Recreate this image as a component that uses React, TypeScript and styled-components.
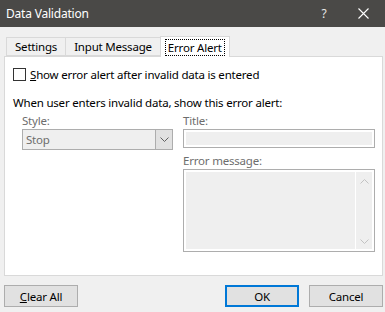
import React from "react";
import styled, { createGlobalStyle } from "styled-components";

const GlobalStyle = createGlobalStyle`
  html, body {
    margin: 0;
    padding: 0;
    background: #f0f0f0;
  }
  #root {
    width: 385px;
    height: 312px;
    overflow: hidden;
  }
  * {
    box-sizing: border-box;
  }
`;

const font = `"Noto Sans", "Open Sans", "Liberation Sans", sans-serif`;

const Dialog = styled.div`
  width: 385px;
  height: 312px;
  display: flex;
  flex-direction: column;
  background: #f0f0f0;
  font-family: ${font};
  font-size: 11.5px;
  letter-spacing: -0.2px;
  color: #000;
`;

const TitleBar = styled.div`
  height: 27px;
  background: #4a4947;
  display: flex;
  align-items: center;
  padding-left: 6px;
  color: #fff;
  font-size: 12px;
`;

const TitleText = styled.span`
  flex: 1;
`;

const TitleButton = styled.span<{ $w: number }>`
  width: ${(p) => p.$w}px;
  display: flex;
  justify-content: center;
  align-items: center;
  color: #e8e8e8;
`;

const Body = styled.div`
  flex: 1;
  display: flex;
  flex-direction: column;
  padding: 8px 2px 5px 4px;
`;

const TabRow = styled.div`
  display: flex;
  align-items: flex-end;
  height: 21px;
  padding-left: 3px;
  position: relative;
  z-index: 1;
`;

const Tab = styled.div<{ $active?: boolean }>`
  height: ${(p) => (p.$active ? 21 : 19)}px;
  padding: 0 ${(p) => (p.$active ? 5 : 8)}px;
  display: flex;
  align-items: center;
  background: ${(p) => (p.$active ? "#fff" : "#f0f0f0")};
  border: 1px solid #d9d9d9;
  border-bottom: ${(p) => (p.$active ? "none" : "1px solid #d9d9d9")};
  margin-left: -1px;
  margin-bottom: ${(p) => (p.$active ? -1 : 0)}px;
`;

const FocusText = styled.span`
  outline: 1px dotted #000;
  padding: 0 2px;
  line-height: 15px;
`;

const Panel = styled.div`
  height: 220px;
  background: #fff;
  border: 1px solid #d9d9d9;
  padding: 10px 8px 0 8px;
  display: flex;
  flex-direction: column;
`;

const CheckRow = styled.label`
  display: flex;
  align-items: center;
  gap: 4px;
  height: 15px;
`;

const CheckBox = styled.span`
  width: 13px;
  height: 13px;
  border: 1px solid #333;
  background: #fff;
`;

const Underline = styled.span`
  text-decoration: underline;
`;

const Heading = styled.div`
  margin-top: 12px;
  height: 16px;
  display: flex;
  align-items: center;
`;

const Columns = styled.div`
  display: grid;
  grid-template-columns: 151px 192px;
  column-gap: 10px;
  padding-left: 9px;
  margin-top: 2px;
`;

const Field = styled.div`
  display: flex;
  flex-direction: column;
`;

const Label = styled.div<{ $top?: number }>`
  color: #6d6d6d;
  height: 16px;
  display: flex;
  align-items: center;
  margin-top: ${(p) => p.$top ?? 0}px;
  margin-bottom: 1px;
`;

const Combo = styled.div`
  height: 21px;
  border: 1px solid #adadad;
  background: #efefef;
  display: flex;
  color: #6d6d6d;
`;

const ComboText = styled.div`
  flex: 1;
  display: flex;
  align-items: center;
  padding-left: 3px;
`;

const ComboButton = styled.div`
  width: 17px;
  border-left: 1px solid #adadad;
  background: #e1e1e1;
  display: flex;
  align-items: center;
  justify-content: center;
`;

const TextBox = styled.div<{ $h: number }>`
  height: ${(p) => p.$h}px;
  border: 1px solid #adadad;
  background: #fff;
  padding: 2px;
  display: flex;
`;

const Fill = styled.div`
  flex: 1;
  background: #efefef;
`;

const ScrollBar = styled.div`
  width: 16px;
  margin-left: 1px;
  background: #efefef;
  display: flex;
  flex-direction: column;
  justify-content: space-between;
  align-items: center;
  padding: 7px 0 5px;
`;

const ButtonRow = styled.div`
  display: flex;
  align-items: center;
  margin-top: 9px;
`;

const Button = styled.div<{ $primary?: boolean }>`
  width: 74px;
  height: 22px;
  display: flex;
  align-items: center;
  justify-content: center;
  background: #e1e1e1;
  border: ${(p) => (p.$primary ? "2px solid #0078d7" : "1px solid #adadad")};
`;

const Spacer = styled.div`
  flex: 1;
`;

const Gap = styled.div<{ $w: number }>`
  width: ${(p) => p.$w}px;
`;

function Chevron({ up, color }: { up?: boolean; color: string }) {
  return (
    <svg width="9" height="5" viewBox="0 0 9 5">
      <path
        d={up ? "M0.5 4.5 L4.5 0.5 L8.5 4.5" : "M0.5 0.5 L4.5 4.5 L8.5 0.5"}
        fill="none"
        stroke={color}
        strokeWidth="1"
      />
    </svg>
  );
}

function CloseIcon() {
  return (
    <svg width="11" height="11" viewBox="0 0 11 11">
      <path d="M0.5 0.5 L10.5 10.5 M10.5 0.5 L0.5 10.5" stroke="#fff" strokeWidth="1.1" />
    </svg>
  );
}

export default function App() {
  return (
    <>
      <GlobalStyle />
      <Dialog>
        <TitleBar>
          <TitleText>Data Validation</TitleText>
          <TitleButton $w={34}>?</TitleButton>
          <TitleButton $w={44}>
            <CloseIcon />
          </TitleButton>
        </TitleBar>
        <Body>
          <TabRow>
            <Tab>Settings</Tab>
            <Tab>Input Message</Tab>
            <Tab $active>
              <FocusText>Error Alert</FocusText>
            </Tab>
          </TabRow>
          <Panel>
            <CheckRow>
              <CheckBox />
              <span>
                <Underline>S</Underline>how error alert after invalid data is entered
              </span>
            </CheckRow>
            <Heading>When user enters invalid data, show this error alert:</Heading>
            <Columns>
              <Field>
                <Label>Style:</Label>
                <Combo>
                  <ComboText>Stop</ComboText>
                  <ComboButton>
                    <Chevron color="#606060" />
                  </ComboButton>
                </Combo>
              </Field>
              <Field>
                <Label>Title:</Label>
                <TextBox $h={19}>
                  <Fill />
                </TextBox>
                <Label $top={4}>Error message:</Label>
                <TextBox $h={83}>
                  <Fill />
                  <ScrollBar>
                    <Chevron up color="#c2c2c2" />
                    <Chevron color="#c2c2c2" />
                  </ScrollBar>
                </TextBox>
              </Field>
            </Columns>
          </Panel>
          <ButtonRow>
            <Button>
              <span>
                <Underline>C</Underline>lear All
              </span>
            </Button>
            <Spacer />
            <Button $primary>OK</Button>
            <Gap $w={10} />
            <Button>Cancel</Button>
          </ButtonRow>
        </Body>
      </Dialog>
    </>
  );
}
